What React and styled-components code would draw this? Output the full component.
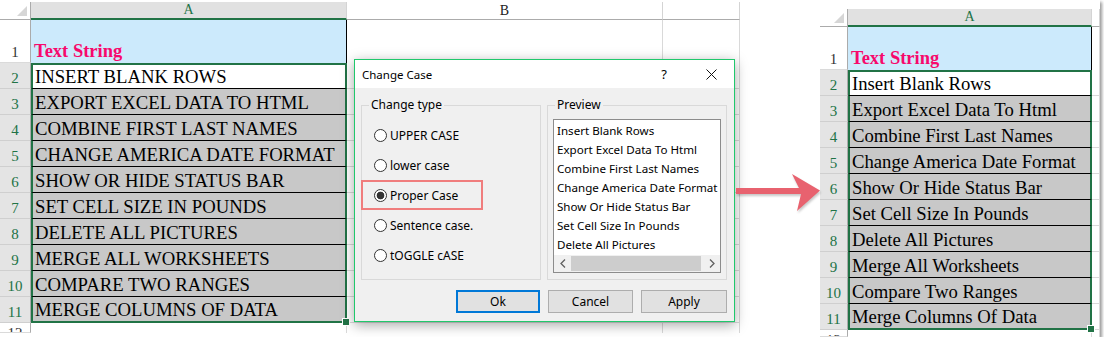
import React from "react";
import styled, { createGlobalStyle } from "styled-components";

const GREEN = "#217346";

const GlobalStyle = createGlobalStyle`
  *, *::before, *::after { box-sizing: border-box; }
  html, body { margin: 0; padding: 0; background: #fff; }
  body { font-family: "Noto Sans", sans-serif; }
`;

const Frame = styled.div`
  position: relative;
  width: 1100px;
  height: 337px;
  display: flex;
  background: #fff;
  box-shadow: 2px 2px 3px rgba(0, 0, 0, 0.4);
`;

const LeftPanel = styled.div`
  position: relative;
  width: 740px;
  padding-top: 2px;
`;

const RightPanel = styled.div`
  margin-left: 80px;
  padding-top: 9px;
`;

const Sheet = styled.div`
  display: grid;
  grid-template-columns: ${(p) => p.$cols};
  grid-template-rows: 18px 43px repeat(10, 26px) ${(p) => p.$tail}px;
  overflow: hidden;
`;

const Corner = styled.div`
  position: relative;
  background: #fff;
  border-right: 1px solid #ababab;
  border-bottom: 1px solid #ababab;
  &::after {
    content: "";
    position: absolute;
    right: 3px;
    bottom: 3px;
    border-style: solid;
    border-width: 0 0 10px 10px;
    border-color: transparent transparent #d6d6d6 transparent;
  }
`;

const ColHead = styled.div`
  display: flex;
  align-items: center;
  justify-content: center;
  background: ${(p) => (p.$sel ? "#e1e1e1" : "#fff")};
  color: ${(p) => (p.$sel ? GREEN : "#222")};
  border-right: 1px solid #d4d4d4;
  border-bottom: ${(p) => (p.$sel ? `2px solid ${GREEN}` : "1px solid #ababab")};
  font: 14px "Liberation Serif", serif;
`;

const RowHead = styled.div`
  display: flex;
  justify-content: center;
  align-items: ${(p) => (p.$tail ? "flex-start" : "flex-end")};
  padding: ${(p) => (p.$tail ? "3px 0 0" : "0 0 2.5px")};
  background: ${(p) => (p.$sel ? "#e4e4e4" : "#fff")};
  color: ${(p) => (p.$sel ? GREEN : "#333")};
  border-right: 1px solid #ababab;
  border-bottom: 1px solid ${(p) => (p.$sel ? "#cfcfcf" : "#dadada")};
  font: 15px/1 "Liberation Serif", serif;
  overflow: hidden;
`;

const TitleCell = styled.div`
  display: flex;
  align-items: flex-end;
  padding: 0 0 3px 3px;
  background: #cceafc;
  border-right: 1px solid #000;
  color: #f7096c;
  font: bold 18.5px/1 "Liberation Serif", serif;
  white-space: nowrap;
`;

const DataCell = styled.div`
  position: relative;
  display: flex;
  align-items: flex-end;
  padding: 0 0 1px 2px;
  background: ${(p) => p.$fill};
  border-left: 2px solid ${GREEN};
  border-right: 2px solid ${GREEN};
  border-top: ${(p) => (p.$first ? `2px solid ${GREEN}` : "none")};
  border-bottom: ${(p) => (p.$last ? `2px solid ${GREEN}` : "1px solid #000")};
  color: #000;
  font: 18.7px/1 "Liberation Serif", serif;
  white-space: nowrap;

  ${(p) =>
    p.$last &&
    `&::after {
      content: "";
      position: absolute;
      right: -5px;
      bottom: -5px;
      width: 8px;
      height: 8px;
      background: ${GREEN};
      border: 1px solid #fff;
      z-index: 2;
    }`}
`;

const Blank = styled.div`
  background: #fff;
  border-right: 1px solid #d9d9d9;
  border-bottom: ${(p) => (p.$open ? "none" : "1px solid #d9d9d9")};
`;

/* ---------- dialog ---------- */

const Dialog = styled.div`
  position: absolute;
  left: 354px;
  top: 59px;
  width: 381px;
  height: 263px;
  display: flex;
  flex-direction: column;
  background: #f0f0f0;
  border: 1px solid #20c86c;
  box-shadow: 0 3px 12px rgba(0, 0, 0, 0.35);
  font-family: "Noto Sans", sans-serif;
  font-size: 11.6px;
  color: #000;
  z-index: 3;
`;

const TitleBar = styled.div`
  height: 28px;
  display: flex;
  align-items: center;
  padding-left: 7px;
  background: #fff;
  font-size: 11.5px;
`;

const Title = styled.div`
  flex: 1;
`;

const HelpMark = styled.div`
  width: 20px;
  margin-right: 14px;
  text-align: center;
  font-size: 13px;
`;

const CloseBox = styled.div`
  width: 46px;
  height: 28px;
  display: flex;
  align-items: center;
  justify-content: center;
`;

const Body = styled.div`
  flex: 1;
  display: flex;
  flex-direction: column;
  padding: 17px 7px 0 6px;
`;

const Groups = styled.div`
  display: flex;
  gap: 6px;
`;

const Group = styled.div`
  width: 180px;
  height: 175px;
  display: flex;
  flex-direction: column;
  border: 1px solid #d9d9d9;
`;

const Legend = styled.div`
  align-self: flex-start;
  margin: -9px 0 0 7px;
  padding: 0 2px;
  line-height: 16px;
  font-size: 12px;
  background: #f0f0f0;
`;

const RadioList = styled.div`
  padding-top: 7px;
  display: flex;
  flex-direction: column;
`;

const RadioRow = styled.div`
  height: 30px;
  width: ${(p) => (p.$mark ? "122px" : "auto")};
  margin-left: -1px;
  padding-left: 11px;
  display: flex;
  align-items: center;
  border: 2px solid ${(p) => (p.$mark ? "#f07d7d" : "transparent")};
`;

const RadioDot = styled.span`
  width: 13px;
  height: 13px;
  flex: none;
  border-radius: 50%;
  border: 1px solid #333;
  background: ${(p) =>
    p.$on ? "radial-gradient(circle, #333 0 3.5px, #fff 4.2px)" : "#fff"};
`;

const RadioLabel = styled.span`
  margin-left: 3px;
  font-size: 12px;
  white-space: nowrap;
`;

const ListBox = styled.div`
  margin: 6px 0 0 5px;
  width: 168px;
  height: 154px;
  display: flex;
  flex-direction: column;
  background: #fff;
  border: 1px solid #8c8c8c;
`;

const ListItems = styled.div`
  flex: 1;
  padding: 1px 0 0 3px;
  overflow: hidden;
  white-space: nowrap;
  line-height: 19px;
`;

const HScroll = styled.div`
  height: 17px;
  display: flex;
  align-items: center;
  background: #f0f0f0;
`;

const ScrollArrow = styled.div`
  width: 17px;
  height: 17px;
  display: flex;
  align-items: center;
  justify-content: center;
`;

const Thumb = styled.div`
  width: 130px;
  height: 15px;
  margin-right: 2px;
  background: #cdcdcd;
`;

const ScrollGap = styled.div`
  flex: 1;
`;

const ButtonRow = styled.div`
  display: flex;
  justify-content: flex-end;
  gap: 8px;
  margin-top: 10px;
`;

const Button = styled.div`
  width: ${(p) => p.$w}px;
  height: 23px;
  display: flex;
  align-items: center;
  justify-content: center;
  background: #e1e1e1;
  font-size: 12px;
  border: ${(p) => (p.$default ? "2px solid #0078d7" : "1px solid #adadad")};
`;

const Arrow = styled.svg`
  position: absolute;
  left: 735px;
  top: 168px;
  z-index: 4;
  filter: drop-shadow(1px 2px 1px rgba(0, 0, 0, 0.22));
`;

const upper = [
  "INSERT BLANK ROWS",
  "EXPORT EXCEL DATA TO HTML",
  "COMBINE FIRST LAST NAMES",
  "CHANGE AMERICA DATE FORMAT",
  "SHOW OR HIDE STATUS BAR",
  "SET CELL SIZE IN POUNDS",
  "DELETE ALL PICTURES",
  "MERGE ALL WORKSHEETS",
  "COMPARE TWO RANGES",
  "MERGE COLUMNS OF DATA",
];

const proper = [
  "Insert Blank Rows",
  "Export Excel Data To Html",
  "Combine First Last Names",
  "Change America Date Format",
  "Show Or Hide Status Bar",
  "Set Cell Size In Pounds",
  "Delete All Pictures",
  "Merge All Worksheets",
  "Compare Two Ranges",
  "Merge Columns Of Data",
];

const options = [
  "UPPER CASE",
  "lower case",
  "Proper Case",
  "Sentence case.",
  "tOGGLE cASE",
];

function Spreadsheet({ widths, headers, rows, tail }) {
  const extra = headers.slice(1);
  return (
    <Sheet $cols={widths.map((w) => `${w}px`).join(" ")} $tail={tail}>
      <Corner />
      {headers.map((h, i) => (
        <ColHead key={i} $sel={i === 0}>
          {h}
        </ColHead>
      ))}

      <RowHead>1</RowHead>
      <TitleCell>Text String</TitleCell>
      {extra.map((_, j) => (
        <Blank key={j} $open />
      ))}

      {rows.map((text, i) => (
        <React.Fragment key={i}>
          <RowHead $sel>{i + 2}</RowHead>
          <DataCell
            $first={i === 0}
            $last={i === rows.length - 1}
            $fill={i === 0 ? "#fff" : "#c8c8c8"}
          >
            {text}
          </DataCell>
          {extra.map((_, j) => (
            <Blank key={j} />
          ))}
        </React.Fragment>
      ))}

      <RowHead $tail>12</RowHead>
      <Blank $open />
      {extra.map((_, j) => (
        <Blank key={j} $open />
      ))}
    </Sheet>
  );
}

function ChangeCaseDialog() {
  return (
    <Dialog>
      <TitleBar>
        <Title>Change Case</Title>
        <HelpMark>?</HelpMark>
        <CloseBox>
          <svg width="11" height="11" viewBox="0 0 11 11">
            <path d="M0.5 0.5 L10.5 10.5 M10.5 0.5 L0.5 10.5" stroke="#111" strokeWidth="1" />
          </svg>
        </CloseBox>
      </TitleBar>
      <Body>
        <Groups>
          <Group>
            <Legend>Change type</Legend>
            <RadioList>
              {options.map((o, i) => (
                <RadioRow key={o} $mark={i === 2}>
                  <RadioDot $on={i === 2} />
                  <RadioLabel>{o}</RadioLabel>
                </RadioRow>
              ))}
            </RadioList>
          </Group>
          <Group>
            <Legend>Preview</Legend>
            <ListBox>
              <ListItems>
                {proper.slice(0, 7).map((t) => (
                  <div key={t}>{t}</div>
                ))}
              </ListItems>
              <HScroll>
                <ScrollArrow>
                  <svg width="6" height="9" viewBox="0 0 6 9">
                    <path d="M5 0.5 L1 4.5 L5 8.5" fill="none" stroke="#606060" strokeWidth="1.3" />
                  </svg>
                </ScrollArrow>
                <Thumb />
                <ScrollGap />
                <ScrollArrow>
                  <svg width="6" height="9" viewBox="0 0 6 9">
                    <path d="M1 0.5 L5 4.5 L1 8.5" fill="none" stroke="#606060" strokeWidth="1.3" />
                  </svg>
                </ScrollArrow>
              </HScroll>
            </ListBox>
          </Group>
        </Groups>
        <ButtonRow>
          <Button $w={84} $default>Ok</Button>
          <Button $w={85}>Cancel</Button>
          <Button $w={86}>Apply</Button>
        </ButtonRow>
      </Body>
    </Dialog>
  );
}

export default function App() {
  return (
    <>
      <GlobalStyle />
      <Frame>
        <LeftPanel>
          <Spreadsheet
            widths={[31, 316, 316, 77]}
            headers={["A", "B", ""]}
            rows={upper}
            tail={10}
          />
          <ChangeCaseDialog />
        </LeftPanel>
        <Arrow width="90" height="48" viewBox="0 0 90 48">
          <path
            d="M1 20 L64 20 L57 6 L85 22.5 L62 43 L66 26 L1 26 Z"
            fill="#e8626f"
          />
        </Arrow>
        <RightPanel>
          <Spreadsheet
            widths={[28, 244, 8]}
            headers={["A", ""]}
            rows={proper}
            tail={7}
          />
        </RightPanel>
      </Frame>
    </>
  );
}
